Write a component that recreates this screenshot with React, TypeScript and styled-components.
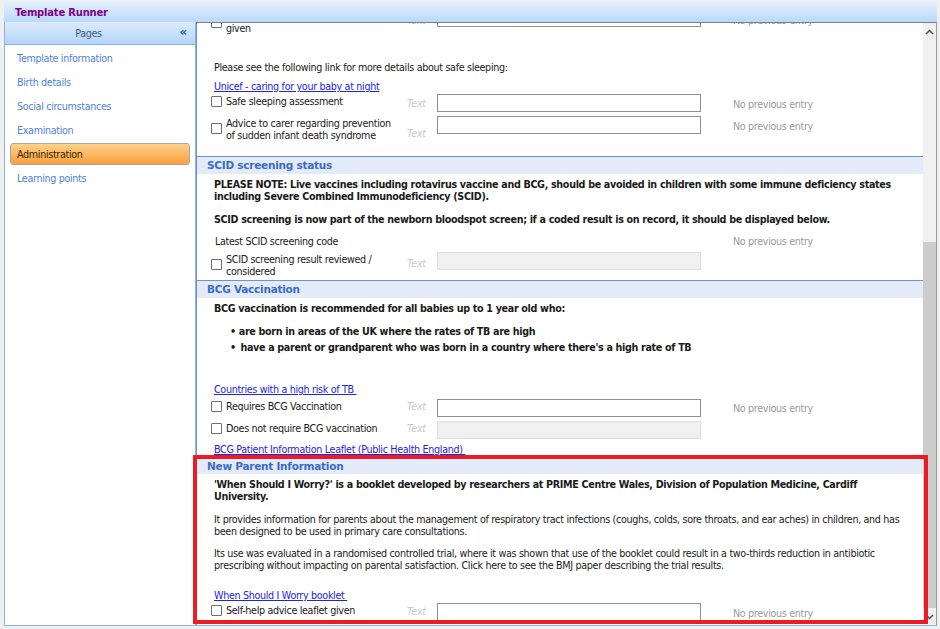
import type { ReactNode } from "react";
import styled, { createGlobalStyle } from "styled-components";

const GlobalStyle = createGlobalStyle`
  html, body {
    margin: 0;
    padding: 0;
    background: #f0f0f0;
  }
  body {
    font-family: "DejaVu Sans", Verdana, sans-serif;
    font-size: 9.6px;
    letter-spacing: -0.33px;
  }
`;

const Window = styled.div`
  position: relative;
  width: 940px;
  height: 629px;
  padding: 1px 3px 3px 4px;
  box-sizing: border-box;
  display: flex;
  flex-direction: column;
  overflow: hidden;
`;

const TitleBar = styled.div`
  height: 21px;
  flex: none;
  box-sizing: border-box;
  display: flex;
  align-items: center;
  padding: 1px 0 0 11px;
  font: bold 10px "DejaVu Sans", sans-serif;
  letter-spacing: -0.2px;
  color: #800080;
  background: linear-gradient(#e6f1fd, #b9d8fb);
`;

const Body = styled.div`
  flex: 1;
  min-height: 0;
  display: flex;
`;

const Sidebar = styled.aside`
  width: 192px;
  flex: none;
  display: flex;
  flex-direction: column;
  background: #fff;
  border: 1px solid #8ab4ea;
  border-top: none;
  box-sizing: border-box;
`;

const SidebarHeader = styled.div`
  height: 23px;
  flex: none;
  box-sizing: border-box;
  display: flex;
  align-items: center;
  justify-content: center;
  padding: 1px 23px 0 0;
  position: relative;
  color: #3d5a80;
  background: linear-gradient(#dcebfc, #b5d5fa);
  border-bottom: 1px solid #8ab4ea;
`;

const Collapse = styled.span`
  position: absolute;
  right: 8px;
  top: 3px;
  font: bold 12px "DejaVu Sans", sans-serif;
  color: #2f5d9e;
`;

const NavList = styled.nav`
  display: flex;
  flex-direction: column;
  gap: 4px;
  padding: 3px 6px;
`;

const NavItem = styled.div<{ $active?: boolean }>`
  height: 20px;
  display: flex;
  align-items: center;
  padding-left: 6px;
  border-radius: 2px;
  color: ${({ $active }) => ($active ? "#3a2200" : "#4f82dc")};
  background: ${({ $active }) =>
    $active ? "linear-gradient(#fdd28a, #fb9f3c)" : "transparent"};
  outline: ${({ $active }) => ($active ? "1px solid #a8a8a8" : "none")};
`;

const Main = styled.main`
  flex: 1;
  min-width: 0;
  display: flex;
  flex-direction: column;
`;

const MainTop = styled.div`
  height: 1px;
  flex: none;
  background: #808080;
`;

const MainBody = styled.div`
  flex: 1;
  min-height: 0;
  display: flex;
  border-left: 1px solid #6d8fc4;
  border-right: 1px solid #9a9a9a;
  border-bottom: 1px solid #8ab4ea;
  background: #fff;
`;

const Scroller = styled.div`
  flex: 1;
  min-width: 0;
  overflow: hidden;
  background: #fff;
  color: #1a1a1a;
`;

const ScrollContent = styled.div`
  margin-top: -14px;
`;

const Section = styled.section<{ $mt?: number }>`
  margin-top: ${({ $mt }) => $mt ?? 0}px;
`;

const SectionTitle = styled.h2<{ $line?: boolean }>`
  margin: 0;
  box-sizing: border-box;
  height: ${({ $line }) => ($line ? "18px" : "15px")};
  border-top: ${({ $line }) => ($line ? "1px solid #6b93dc" : "none")};
  display: flex;
  align-items: center;
  padding: 0 0 1px 10px;
  font: bold 10.5px "DejaVu Sans", sans-serif;
  letter-spacing: -0.25px;
  color: #3a6bc8;
  background: #e3ebf8;
`;

const Line = styled.div<{ $bold?: boolean; $mt?: number; $indent?: number }>`
  margin-left: ${({ $indent }) => 17 + ($indent ?? 0)}px;
  margin-right: 12px;
  margin-top: ${({ $mt }) => $mt ?? 0}px;
  line-height: 12px;
  font-weight: ${({ $bold }) => ($bold ? 700 : 400)};
`;

const LinkLine = styled.a<{ $mt?: number }>`
  display: block;
  width: fit-content;
  margin-left: 17px;
  margin-top: ${({ $mt }) => $mt ?? 0}px;
  line-height: 13px;
  color: #2222ee;
  text-decoration: underline;
`;

const Row = styled.div<{ $h: number; $mt?: number }>`
  display: grid;
  grid-template-columns: 11px 185px 30px 264px 32px 1fr;
  height: ${({ $h }) => $h}px;
  margin-top: ${({ $mt }) => $mt ?? 0}px;
  padding-left: 14px;
  align-items: center;
`;

const Box = styled.span<{ $lift?: boolean }>`
  width: 11px;
  height: 11px;
  border: 1px solid #707070;
  box-sizing: border-box;
  border-radius: 1px;
  background: #fff;
  margin-bottom: ${({ $lift }) => ($lift ? "4px" : "0")};
`;

const RowLabel = styled.div<{ $lift?: boolean; $wide?: boolean }>`
  padding: ${({ $lift }) => ($lift ? "0" : "2px")} 0 0 4px;
  line-height: 11.5px;
  margin-bottom: ${({ $lift }) => ($lift ? "3px" : "0")};
  grid-column: ${({ $wide }) => ($wide ? "1 / 3" : "auto")};
`;

const Hint = styled.div<{ $top: number }>`
  grid-column: 3;
  align-self: start;
  padding-top: ${({ $top }) => $top}px;
  line-height: 12px;
  font-style: italic;
  color: #c8c8c8;
`;

const Field = styled.div<{ $disabled?: boolean }>`
  grid-column: 4;
  align-self: start;
  height: 18px;
  box-sizing: border-box;
  border: 1px solid ${({ $disabled }) => ($disabled ? "#dedede" : "#8f8f8f")};
  background: ${({ $disabled }) => ($disabled ? "#f0f0f0" : "#fff")};
`;

const Previous = styled.div<{ $top?: number }>`
  grid-column: 6;
  align-self: start;
  padding-top: ${({ $top }) => $top ?? 5}px;
  line-height: 12px;
  color: #9a9a9a;
  white-space: nowrap;
`;

const Scrollbar = styled.div`
  width: 13px;
  flex: none;
  display: flex;
  flex-direction: column;
  background: #f0f0f0;
`;

const ScrollButton = styled.div`
  height: 17px;
  flex: none;
  display: flex;
  align-items: center;
  justify-content: center;
`;

const ScrollSpace = styled.div`
  flex: 1;
  display: flex;
  flex-direction: column;
`;

const Thumb = styled.div`
  margin-top: auto;
  height: 366px;
  background: #cdcdcd;
`;

const Annotation = styled.div`
  position: absolute;
  left: 193px;
  top: 455px;
  width: 735px;
  height: 169px;
  box-sizing: border-box;
  border: 4px solid #ed1c24;
  pointer-events: none;
`;

const Chevron = ({ up }: { up?: boolean }) => (
  <svg width="9" height="6" viewBox="0 0 9 6">
    <path
      d={up ? "M1 5 L4.5 1.5 L8 5" : "M1 1 L4.5 4.5 L8 1"}
      fill="none"
      stroke="#555"
      strokeWidth="1.5"
    />
  </svg>
);

type EntryProps = {
  label: ReactNode;
  h?: number;
  mt?: number;
  hintTop?: number;
  previousTop?: number;
  disabled?: boolean;
};

const Entry = ({ label, h = 18, mt, hintTop = 4, previousTop, disabled }: EntryProps) => {
  const lift = h === 18;
  return (
    <Row $h={h} $mt={mt}>
      <Box $lift={lift} />
      <RowLabel $lift={lift}>{label}</RowLabel>
      <Hint $top={hintTop}>Text</Hint>
      <Field $disabled={disabled} />
      {!disabled && <Previous $top={previousTop}>No previous entry</Previous>}
    </Row>
  );
};

const pages = [
  "Template information",
  "Birth details",
  "Social circumstances",
  "Examination",
  "Administration",
  "Learning points",
];

export default function App() {
  return (
    <>
      <GlobalStyle />
      <Window>
        <TitleBar>Template Runner</TitleBar>
        <Body>
          <Sidebar>
            <SidebarHeader>
              Pages
              <Collapse>«</Collapse>
            </SidebarHeader>
            <NavList>
              {pages.map((p) => (
                <NavItem key={p} $active={p === "Administration"}>
                  {p}
                </NavItem>
              ))}
            </NavList>
          </Sidebar>
          <Main>
            <MainTop />
            <MainBody>
              <Scroller>
                <ScrollContent>
                  <Section>
                    <Entry label={<><br />given</>} h={26} hintTop={6} previousTop={6} />
                    <Line $mt={27}>Please see the following link for more details about safe sleeping:</Line>
                    <LinkLine $mt={6}>Unicef - caring for your baby at night</LinkLine>
                    <Entry label="Safe sleeping assessment" mt={1} />
                    <Entry
                      label={<>Advice to carer regarding prevention<br />of sudden infant death syndrome</>}
                      h={24}
                      mt={4}
                      hintTop={12}
                    />
                  </Section>
                  <Section $mt={16}>
                    <SectionTitle $line>SCID screening status</SectionTitle>
                    <Line $bold $mt={5}>
                      PLEASE NOTE: Live vaccines including rotavirus vaccine and BCG, should be avoided in children with some immune deficiency states including Severe Combined Immunodeficiency (SCID).
                    </Line>
                    <Line $bold $mt={11}>
                      SCID screening is now part of the newborn bloodspot screen; if a coded result is on record, it should be displayed below.
                    </Line>
                    <Row $h={18} $mt={8}>
                      <RowLabel $wide $lift>Latest SCID screening code</RowLabel>
                      <Previous $top={2}>No previous entry</Previous>
                    </Row>
                    <Entry label={<>SCID screening result reviewed /<br />considered</>} h={24} hintTop={6} disabled />
                  </Section>
                  <Section $mt={4}>
                    <SectionTitle $line>BCG Vaccination</SectionTitle>
                    <Line $bold $mt={5}>BCG vaccination is recommended for all babies up to 1 year old who:</Line>
                    <Line $bold $mt={11} $indent={16}>• are born in areas of the UK where the rates of TB are high</Line>
                    <Line $bold $mt={4} $indent={16}>•{"\u00a0\u2009"}have a parent or grandparent who was born in a country where there's a high rate of TB</Line>
                    <LinkLine $mt={29}>Countries with a high risk of TB&nbsp;</LinkLine>
                    <Entry label="Requires BCG Vaccination" mt={3} hintTop={2} previousTop={4} />
                    <Entry label="Does not require BCG vaccination" mt={4} hintTop={2} disabled />
                    <LinkLine $mt={4}>BCG Patient Information Leaflet (Public Health England)&nbsp;</LinkLine>
                  </Section>
                  <Section $mt={3}>
                    <SectionTitle>New Parent Information</SectionTitle>
                    <Line $bold $mt={5}>
                      'When Should I Worry?' is a booklet developed by researchers at PRIME Centre Wales, Division of Population Medicine, Cardiff University.
                    </Line>
                    <Line $mt={11}>
                      It provides information for parents about the management of respiratory tract infections (coughs, colds, sore throats, and ear aches) in children, and has been designed to be used in primary care consultations.
                    </Line>
                    <Line $mt={10}>
                      Its use was evaluated in a randomised controlled trial, where it was shown that use of the booklet could result in a two-thirds reduction in antibiotic prescribing without impacting on parental satisfaction. Click here to see the BMJ paper describing the trial results.
                    </Line>
                    <LinkLine $mt={17}>When Should I Worry booklet&nbsp;</LinkLine>
                    <Entry label="Self-help advice leaflet given" mt={1} hintTop={3} />
                  </Section>
                </ScrollContent>
              </Scroller>
              <Scrollbar>
                <ScrollButton><Chevron up /></ScrollButton>
                <ScrollSpace><Thumb /></ScrollSpace>
                <ScrollButton><Chevron /></ScrollButton>
              </Scrollbar>
            </MainBody>
          </Main>
        </Body>
        <Annotation />
      </Window>
    </>
  );
}
